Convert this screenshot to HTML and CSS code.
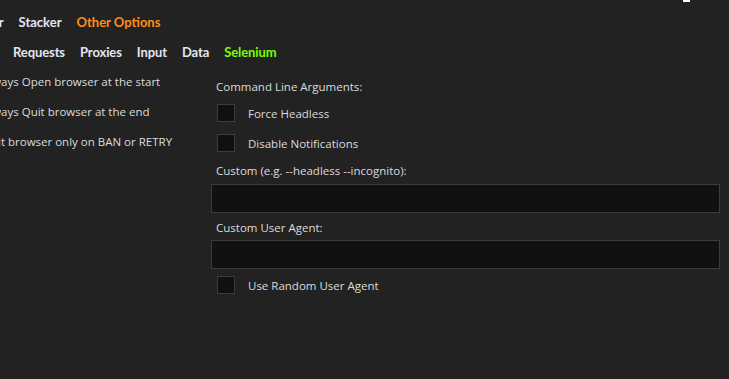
FILE: index.html
```html
<!DOCTYPE html>
<html lang="en">
<head>
    <meta charset="UTF-8">
    <title>Other Options - Selenium</title>
    <link rel="stylesheet" href="styles.css">
</head>
<body>
    <div class="win-min"></div>

    <nav class="tabs main-tabs">
        <span class="tab">Checker</span>
        <span class="tab">Stacker</span>
        <span class="tab tab-active">Other Options</span>
    </nav>

    <nav class="tabs sub-tabs">
        <span class="tab">Requests</span>
        <span class="tab">Proxies</span>
        <span class="tab">Input</span>
        <span class="tab">Data</span>
        <span class="tab tab-selected">Selenium</span>
    </nav>

    <div class="content">
        <!-- Browser lifecycle -->
        <div class="col col-left">
            <label class="check-row"><span class="box"></span>Always Open browser at the start</label>
            <label class="check-row"><span class="box"></span>Always Quit browser at the end</label>
            <label class="check-row"><span class="box"></span>Quit browser only on BAN or RETRY</label>
        </div>

        <!-- Command line options -->
        <div class="col col-right">
            <div class="field-label">Command Line Arguments:</div>
            <label class="check-row first"><span class="box"></span>Force Headless</label>
            <label class="check-row"><span class="box"></span>Disable Notifications</label>

            <div class="field-label custom-label">Custom (e.g. --headless --incognito):</div>
            <input class="text-box" type="text">

            <div class="field-label agent-label">Custom User Agent:</div>
            <input class="text-box agent-box" type="text">

            <label class="check-row random-row"><span class="box"></span>Use Random User Agent</label>
        </div>
    </div>
</body>
</html>
```

FILE: styles.css
```css
* {
    margin: 0;
    padding: 0;
    box-sizing: border-box;
}

html, body {
    width: 100%;
    height: 100%;
    overflow: hidden;
}

body {
    background-color: #222222;
    color: #dcdcdc;
    font-family: 'Open Sans', 'Noto Sans', sans-serif;
    font-size: 11.5px;
    position: relative;
}

/* window minimize button edge */
.win-min {
    position: absolute;
    top: 0;
    left: 683px;
    width: 7px;
    height: 2px;
    background-color: #ffffff;
}

/* Tabs */
.tabs {
    display: flex;
    font-family: 'Lato', 'DejaVu Sans', sans-serif;
    font-weight: bold;
    font-size: 13px;
    line-height: 16px;
    white-space: nowrap;
    color: #e4e6f0;
}

.main-tabs {
    height: 44px;
    padding-top: 14px;
    margin-left: -44px;
    gap: 15px;
}

.sub-tabs {
    height: 16px;
    padding-left: 13px;
    gap: 15px;
    letter-spacing: -0.1px;
}

.tab-active {
    color: #ff8c1a;
}

.tab-selected {
    color: #7cfc00;
}

/* Content columns */
.content {
    display: flex;
}

.col {
    display: flex;
    flex-direction: column;
}

.col-left {
    width: 260px;
    margin-left: -49px;
    padding-top: 12px;
    gap: 12px;
}

.col-right {
    width: 518px;
    padding-top: 17px;
    padding-right: 9px;
}

.check-row {
    display: flex;
    align-items: center;
    gap: 13px;
    height: 18px;
    white-space: nowrap;
}

.col-right .check-row {
    margin-left: 6px;
    margin-top: 12px;
}

.col-right .check-row.first {
    margin-top: 7px;
}

.col-right .check-row.random-row {
    margin-top: 7px;
}

.box {
    width: 18px;
    height: 18px;
    flex: none;
    background-color: #111111;
    border: 1px solid #3c3c3c;
}

.field-label {
    line-height: 20px;
    padding-left: 5px;
}

.custom-label {
    margin-top: 9px;
}

.agent-label {
    margin-top: 5px;
}

.text-box {
    display: block;
    width: 100%;
    height: 29px;
    margin-top: 3px;
    background-color: #111111;
    border: 1px solid #3c3c3c;
    color: #dcdcdc;
    outline: none;
}

.agent-box {
    margin-top: 2px;
}
```
